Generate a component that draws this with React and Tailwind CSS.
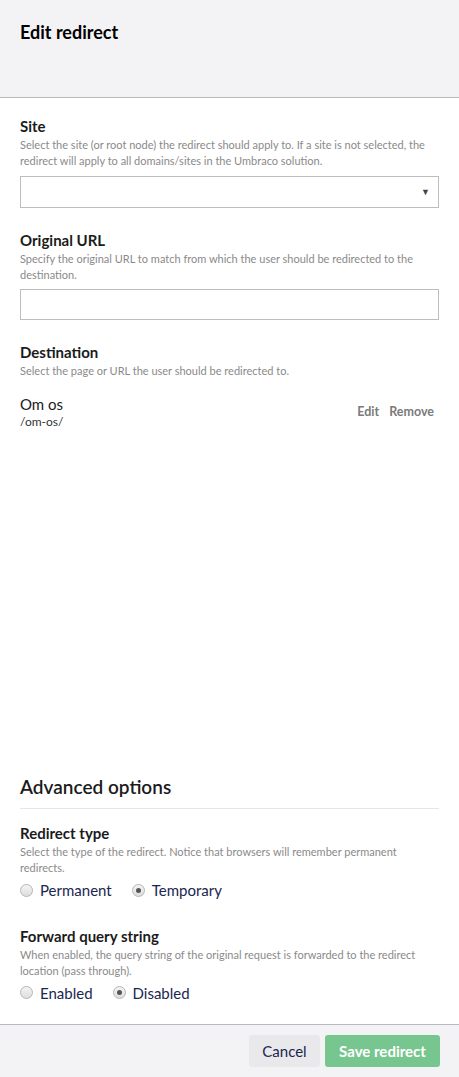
const Radio = ({ label, checked }) => (
  <label className="flex items-center gap-[7px] text-[15px] text-[#1b264f]">
    <span className="w-[13px] h-[13px] rounded-full border border-[#b5b5b5] bg-gradient-to-b from-[#f4f4f4] to-[#dedede] flex items-center justify-center">
      {checked && <span className="w-[5px] h-[5px] rounded-full bg-[#555]" />}
    </span>
    {label}
  </label>
);

const Field = ({ title, desc, children }) => (
  <div>
    <h3 className="text-[15px] font-bold text-[#1b1b1b] leading-5">{title}</h3>
    <p className="text-[11px] text-[#8a8a8a] leading-[16px] mt-[1px]">{desc}</p>
    {children}
  </div>
);

const App = () => {
  return (
    <div
      className="w-[459px] h-[1077px] flex flex-col bg-white"
      style={{ fontFamily: "Lato, 'Open Sans', sans-serif" }}
    >
      {/* Header */}
      <div className="h-[98px] shrink-0 bg-[#f3f3f5] border-b border-[#b9b9bd] px-5 pt-[20px]">
        <h1 className="text-[18px] font-bold text-black leading-6">Edit redirect</h1>
      </div>

      {/* Body */}
      <div className="flex-1 flex flex-col px-5 pt-[18px]">
        <Field
          title="Site"
          desc="Select the site (or root node) the redirect should apply to. If a site is not selected, the redirect will apply to all domains/sites in the Umbraco solution."
        >
          <div className="mt-[7px] h-[32px] border border-[#bdbdbd] flex items-center justify-end pr-[8px]">
            <span className="text-[9px] text-[#444]">▼</span>
          </div>
        </Field>

        <div className="mt-[22px]">
          <Field
            title="Original URL"
            desc="Specify the original URL to match from which the user should be redirected to the destination."
          >
            <div className="mt-[6px] h-[31px] border border-[#bdbdbd]" />
          </Field>
        </div>

        <div className="mt-[22px]">
          <Field title="Destination" desc="Select the page or URL the user should be redirected to.">
            <div className="mt-[15px] flex items-center justify-between">
              <div>
                <div className="text-[15px] text-[#1b1b1b] leading-5">Om os</div>
                <div className="text-[12px] text-[#333] leading-4">/om-os/</div>
              </div>
              <div className="flex gap-[10px] pr-[5px] text-[12.5px] font-bold text-[#7a7a7a]">
                <span>Edit</span>
                <span>Remove</span>
              </div>
            </div>
          </Field>
        </div>

        {/* Advanced options */}
        <div className="mt-auto pb-[20px]">
          <h2 className="text-[19px] font-semibold text-[#1b1b1b] leading-6 pb-[9px] border-b border-[#e6e6e8]">
            Advanced options
          </h2>

          <div className="mt-[14px]">
            <Field
              title="Redirect type"
              desc="Select the type of the redirect. Notice that browsers will remember permanent redirects."
            >
              <div className="mt-[3px] flex gap-[20px]">
                <Radio label="Permanent" />
                <Radio label="Temporary" checked />
              </div>
            </Field>
          </div>

          <div className="mt-[24px]">
            <Field
              title="Forward query string"
              desc="When enabled, the query string of the original request is forwarded to the redirect location (pass through)."
            >
              <div className="mt-[3px] flex gap-[20px]">
                <Radio label="Enabled" />
                <Radio label="Disabled" checked />
              </div>
            </Field>
          </div>
        </div>
      </div>

      {/* Footer */}
      <div className="h-[53px] shrink-0 bg-[#f3f3f5] border-t border-[#b9b9c4] flex items-center justify-end gap-[5px] pr-[19px]">
        <button className="h-[32px] w-[71px] rounded-[3px] bg-[#e9e9eb] text-[15px] text-[#1b264f]">
          Cancel
        </button>
        <button className="h-[32px] w-[115px] rounded-[3px] bg-[#78c68f] text-[15px] font-bold text-white">
          Save redirect
        </button>
      </div>
    </div>
  );
};

export default App;
